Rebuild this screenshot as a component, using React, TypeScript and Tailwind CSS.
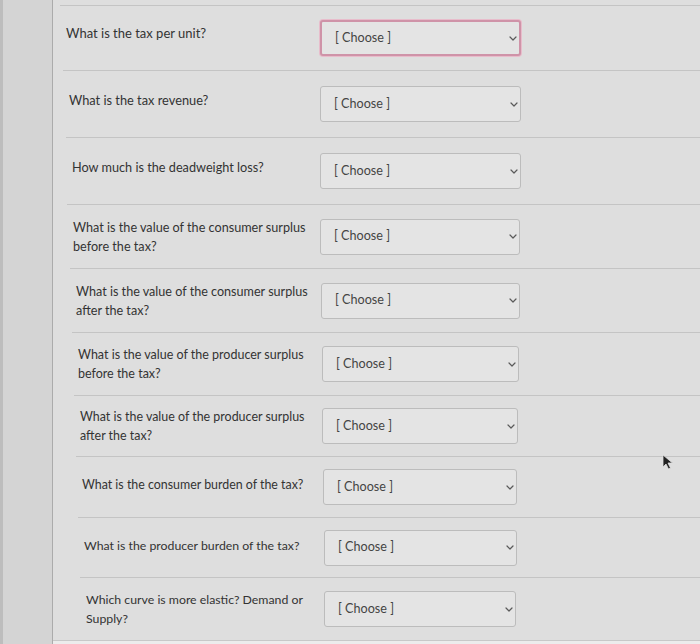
import React from 'react';

type Row = {
  q: string[];
  row: string; // height + left offset of the separator line
  label: string; // width + font size of the label column
  select: string; // width of the select
  lift: string;
  focus?: boolean;
};

const rows: Row[] = [
  { q: ['What is the tax per unit?'], row: 'h-[65px] ml-[7px]', label: 'w-[260px] text-[13px]', select: 'w-[201px]', lift: 'pb-[9px]', focus: true },
  { q: ['What is the tax revenue?'], row: 'h-[67px] ml-[10px]', label: 'w-[257px] text-[12.8px]', select: 'w-[201px]', lift: 'pb-[8px]' },
  { q: ['How much is the deadweight loss?'], row: 'h-[67px] ml-[13px]', label: 'w-[254px] text-[12.7px]', select: 'w-[201px]', lift: 'pb-[8px]' },
  { q: ['What is the value of the consumer surplus', 'before the tax?'], row: 'h-[64px] ml-[14px]', label: 'w-[253px] text-[12.65px]', select: 'w-[200px]', lift: 'pb-[0px]' },
  { q: ['What is the value of the consumer surplus', 'after the tax?'], row: 'h-[64px] ml-[17px]', label: 'w-[251px] text-[12.6px]', select: 'w-[199px]', lift: 'pb-[0px]' },
  { q: ['What is the value of the producer surplus', 'before the tax?'], row: 'h-[63px] ml-[19px]', label: 'w-[250px] text-[12.5px]', select: 'w-[197px]', lift: 'pb-[0px]' },
  { q: ['What is the value of the producer surplus', 'after the tax?'], row: 'h-[61px] ml-[21px]', label: 'w-[248px] text-[12.45px]', select: 'w-[196px]', lift: 'pb-[0px]' },
  { q: ['What is the consumer burden of the tax?'], row: 'h-[61px] ml-[23px]', label: 'w-[247px] text-[12.4px]', select: 'w-[194px]', lift: 'pb-[6px]' },
  { q: ['What is the producer burden of the tax?'], row: 'h-[60px] ml-[25px]', label: 'w-[246px] text-[12.3px]', select: 'w-[193px]', lift: 'pb-[5px]' },
  { q: ['Which curve is more elastic? Demand or', 'Supply?'], row: 'h-[63px] ml-[27px]', label: 'w-[244px] text-[12.3px]', select: 'w-[192px]', lift: 'pb-[0px]' },
];

const Chevron = () => (
  <svg width="8" height="5" viewBox="0 0 8 5" fill="none">
    <path d="M1 1l3 3L7 1" stroke="#5a5a5a" strokeWidth="1.2" strokeLinecap="round" strokeLinejoin="round" />
  </svg>
);

const Select = ({ focus, width }: { focus?: boolean; width: string }) => (
  <div
    className={`${width} h-[36px] shrink-0 flex items-center justify-between pl-[13px] pr-[2px] rounded-[3px] bg-[#e4e4e4] text-[12.6px] text-[#444] ${
      focus ? 'border-2 border-[#cf93a8] shadow-[0_0_0_1px_#e8bccb]' : 'border border-[#bcbcbc]'
    }`}
  >
    <span>[ Choose ]</span>
    <Chevron />
  </div>
);

export default function App() {
  return (
    <div className="relative w-[700px] h-[644px] flex bg-[#dedede] overflow-hidden" style={{ fontFamily: 'Lato, "Noto Sans", sans-serif' }}>
      <div className="w-[53px] shrink-0 bg-[#d4d4d4] border-r border-[#ababab] border-l-[3px] border-l-[#bdbdbd]" />
      <div className="flex-1 flex flex-col">
        <div className="h-[5px] shrink-0" />
        {rows.map((r) => (
          <div key={r.q.join(' ')} className={`${r.row} shrink-0 flex items-center border-t border-[#c4c4c4]`}>
            <div className={`${r.label} ${r.lift} shrink-0 pl-[6px] leading-[19px] text-[#333] whitespace-nowrap`}>
              {r.q.map((line) => (
                <div key={line}>{line}</div>
              ))}
            </div>
            <Select focus={r.focus} width={r.select} />
          </div>
        ))}
        <div className="flex-1 border-t border-[#c8c8c8] bg-[#ececec]" />
      </div>
      {/* mouse pointer */}
      <svg className="absolute left-[662px] top-[454px]" width="12" height="16" viewBox="0 0 12 16">
        <path d="M1 1l0 12l3-3l2.5 5l2-1l-2.5-5l4.5 0z" fill="#222" stroke="#e0e0e0" strokeWidth="0.8" />
      </svg>
    </div>
  );
}
